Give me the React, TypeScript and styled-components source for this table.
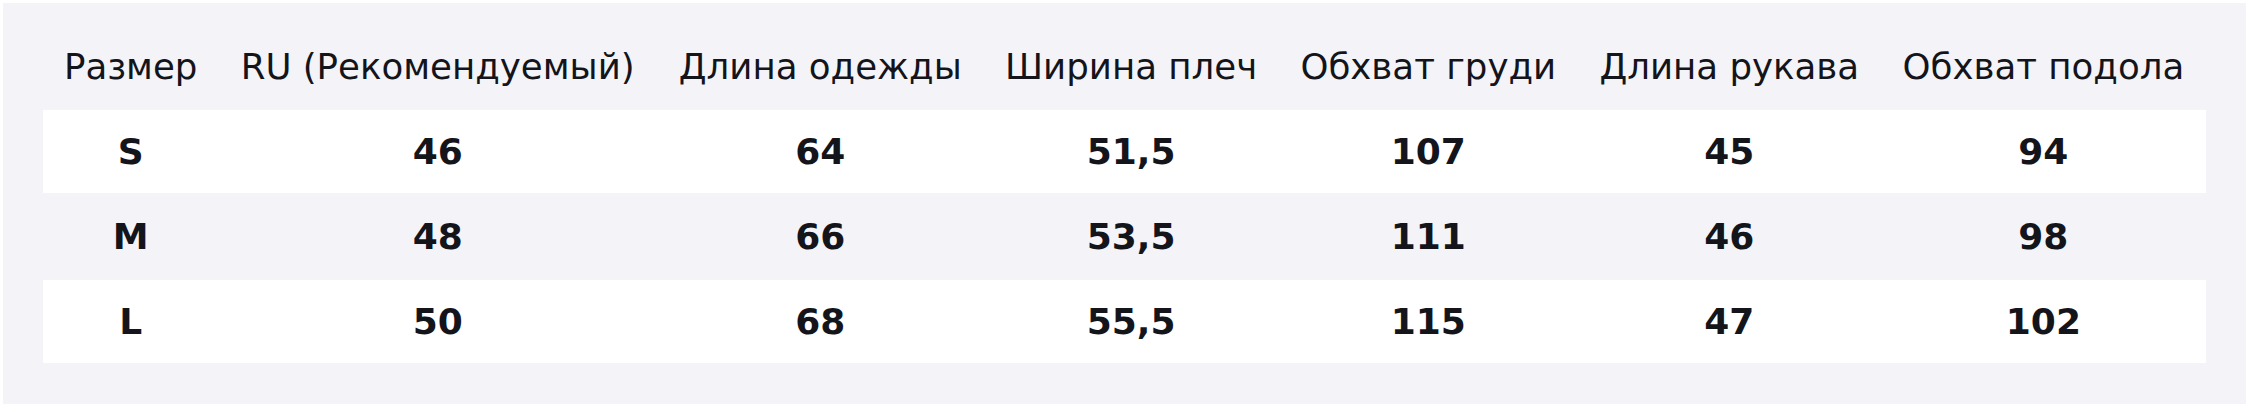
import styled, { createGlobalStyle } from 'styled-components';

const GlobalStyle = createGlobalStyle`
	html, body {
		margin: 0;
		padding: 0;
		background: #ffffff;
	}
	body {
		padding: 3px;
		font-family: 'DejaVu Sans', 'Liberation Sans', sans-serif;
	}
`;

const headers = [
	'Размер',
	'RU (Рекомендуемый)',
	'Длина одежды',
	'Ширина плеч',
	'Обхват груди',
	'Длина рукава',
	'Обхват подола',
];

const rows = [
	['S', '46', '64', '51,5', '107', '45', '94'],
	['M', '48', '66', '53,5', '111', '46', '98'],
	['L', '50', '68', '55,5', '115', '47', '102'],
];

const App = () => {
	return (
		<>
			<GlobalStyle />
			<Panel>
				<SizeTable>
					<thead>
						<tr>
							{headers.map((h) => (
								<HeadCell key={h}>{h}</HeadCell>
							))}
						</tr>
					</thead>
					<tbody>
						{rows.map((row, i) => (
							<BodyRow key={row[0]} $white={i % 2 === 0}>
								{row.map((v, j) => (
									<BodyCell key={j}>{v}</BodyCell>
								))}
							</BodyRow>
						))}
					</tbody>
				</SizeTable>
			</Panel>
		</>
	);
};
export default App;

const Panel = styled.div`
	background: #f4f4f8;
	padding: 40px 40px 41px;
	height: 401px;
	box-sizing: border-box;
`;
const SizeTable = styled.table`
	width: 100%;
	border-collapse: collapse;
	color: #14141b;
	font-size: 36px;
`;
const HeadCell = styled.th`
	font-weight: 400;
	font-size: 35.6px;
	text-align: center;
	white-space: nowrap;
	padding: 3px 20px 22px;
	line-height: 42px;
`;
const BodyRow = styled.tr<{ $white: boolean }>`
	background: ${(p) => (p.$white ? '#ffffff' : 'transparent')};
	height: ${(p) => (p.$white ? '83px' : '87px')};
`;
const BodyCell = styled.td`
	font-weight: 700;
	text-align: center;
	vertical-align: middle;
	padding: 0 20px;
	line-height: 42px;
`;
